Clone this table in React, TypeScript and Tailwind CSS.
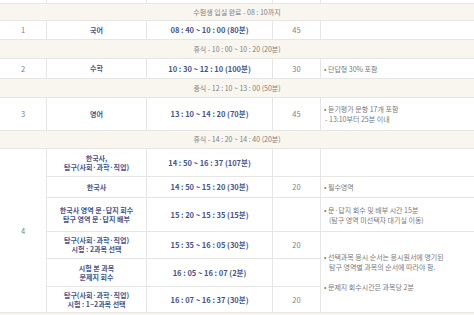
const font = { fontFamily: '"Noto Sans CJK KR", "Noto Sans", sans-serif' };

const cell = "flex items-center justify-center border-b border-r border-[#e6e6e6] text-center";
const navy = "font-bold text-[#45548a]";
const gray = "text-[#808080]";
const noteCell = "flex flex-col justify-center border-b border-[#e6e6e6] pl-[3px] text-[7px] leading-[10px] text-[#7a7a7a]";

const Break = ({ text }: { text: string }) => (
  <div className={`${cell} col-span-5 border-r-0 bg-[#f8f6ef] text-[7px] ${gray}`}>{text}</div>
);

const Num = ({ v }: { v: string }) => <div className={`${cell} text-[7.5px] ${gray}`}>{v}</div>;
const Subject = ({ lines }: { lines: string[] }) => (
  <div className={`${cell} flex-col text-[7px] leading-[9px] ${navy}`}>
    {lines.map((l) => (
      <span key={l}>{l}</span>
    ))}
  </div>
);
const Time = ({ v }: { v: string }) => <div className={`${cell} text-[7.5px] ${navy}`}>{v}</div>;

export default function App() {
  return (
    <div className="h-[315px] w-[474px] overflow-hidden bg-white" style={font}>
      <div className="grid grid-cols-[47px_100px_126px_48px_153px] grid-rows-[4px_17px_19px_19px_20px_19px_33px_18px_28px_21px_34px_27px_28px_26px_3px]">
        {/* partial row above */}
        <div className={cell} />
        <div className={cell} />
        <div className={cell} />
        <div className={cell} />
        <div className={`${cell} border-r-0`} />

        <Break text="수험생 입실 완료 - 08 : 10까지" />

        <Num v="1" />
        <Subject lines={["국어"]} />
        <Time v="08 : 40 ~ 10 : 00 (80분)" />
        <Num v="45" />
        <div className={noteCell} />

        <Break text="휴식 - 10 : 00 ~ 10 : 20 (20분)" />

        <Num v="2" />
        <Subject lines={["수학"]} />
        <Time v="10 : 30 ~ 12 : 10 (100분)" />
        <Num v="30" />
        <div className={noteCell}>
          <span>• 단답형 30% 포함</span>
        </div>

        <Break text="중식 - 12 : 10 ~ 13 : 00 (50분)" />

        <Num v="3" />
        <Subject lines={["영어"]} />
        <Time v="13 : 10 ~ 14 : 20 (70분)" />
        <Num v="45" />
        <div className={noteCell}>
          <span>• 듣기평가 문항 17개 포함</span>
          <span className="pl-[1px]">- 13:10부터 25분 이내</span>
        </div>

        <Break text="휴식 - 14 : 20 ~ 14 : 40 (20분)" />

        <div className={`${cell} row-span-6 text-[7.5px] ${gray}`}>4</div>
        <Subject lines={["한국사,", "탐구(사회·과학·직업)"]} />
        <Time v="14 : 50 ~ 16 : 37 (107분)" />
        <Num v="" />
        <div className={noteCell} />

        <Subject lines={["한국사"]} />
        <Time v="14 : 50 ~ 15 : 20 (30분)" />
        <Num v="20" />
        <div className={noteCell}>
          <span>• 필수영역</span>
        </div>

        <Subject lines={["한국사 영역 문·답지 회수", "탐구 영역 문·답지 배부"]} />
        <Time v="15 : 20 ~ 15 : 35 (15분)" />
        <Num v="" />
        <div className={noteCell}>
          <span>• 문·답지 회수 및 배부 시간 15분</span>
          <span className="pl-[5px]">(탐구 영역 미선택자 대기실 이동)</span>
        </div>

        <Subject lines={["탐구(사회·과학·직업)", "시험 : 2과목 선택"]} />
        <Time v="15 : 35 ~ 16 : 05 (30분)" />
        <Num v="20" />
        <div className={`${noteCell} row-span-3`}>
          <span>• 선택과목 응시 순서는 응시원서에 명기된</span>
          <span className="pl-[5px]">탐구 영역별 과목의 순서에 따라야 함.</span>
          <span className="h-[10px]" />
          <span>• 문제지 회수시간은 과목당 2분</span>
        </div>

        <Subject lines={["시험 본 과목", "문제지 회수"]} />
        <Time v="16 : 05 ~ 16 : 07 (2분)" />
        <Num v="" />

        <Subject lines={["탐구(사회·과학·직업)", "시험 : 1~2과목 선택"]} />
        <Time v="16 : 07 ~ 16 : 37 (30분)" />
        <Num v="20" />

        <div className="col-span-5 bg-[#f8f6ef]" />
      </div>
    </div>
  );
}
